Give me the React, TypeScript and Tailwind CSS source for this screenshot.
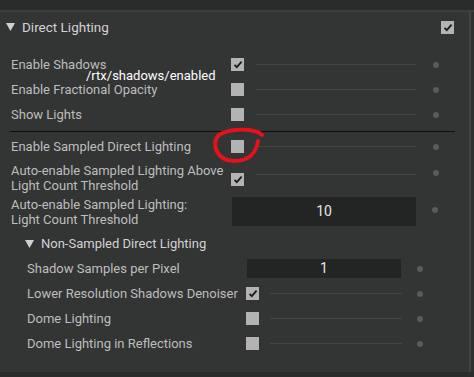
import React from 'react';

const Check = ({ on }: { on: boolean }) => (
  <div className="w-[13px] h-[13px] bg-[#b3b3b3] flex items-center justify-center shrink-0">
    {on && (
      <svg width="10" height="9" viewBox="0 0 10 9">
        <path d="M1.5 4.8 L3.8 7.2 L8.6 1.6" stroke="#1c1c1c" strokeWidth="1.8" fill="none" />
      </svg>
    )}
  </div>
);

const Dot = () => <div className="w-[6px] h-[6px] rounded-full bg-[#5a5b5b] shrink-0" />;

const Triangle = () => (
  <svg width="9" height="8" viewBox="0 0 9 8" className="shrink-0">
    <path d="M0 0 L9 0 L4.5 8 Z" fill="#d0d0d0" />
  </svg>
);

type RowProps = { label: React.ReactNode; on: boolean; nested?: boolean; h?: string };

const CheckRow = ({ label, on, nested, h = 'h-[25px]' }: RowProps) => (
  <div className={`flex items-center ${h}`}>
    <div className={nested ? 'w-[219px] leading-[15px]' : 'w-[220px] leading-[15px]'}>{label}</div>
    <Check on={on} />
    <div className={nested ? 'ml-[11px] w-[132px] h-px bg-[#434444]' : 'ml-[12px] w-[160px] h-px bg-[#434444]'} />
    <div className={nested ? 'ml-[15px]' : 'ml-[17px]'}>
      <Dot />
    </div>
  </div>
);

export default function App() {
  return (
    <div
      className="relative w-[474px] h-[377px] overflow-hidden bg-[#2b2c2c] text-[13px] text-[#bdbebe]"
      style={{ fontFamily: 'Roboto, "Noto Sans", sans-serif' }}
    >
      <div className="h-[10px] bg-[#2a2b2b]" />
      <div className="h-[2px] bg-[#3b3c3c]" />
      <div className="flex h-[360px]">
        <div className="w-[469px] bg-[#333434] flex flex-col">
          {/* header */}
          <div className="h-[30px] flex items-center pl-[6px] pr-[15px]">
            <Triangle />
            <span className="ml-[7px] text-[13.5px] text-[#d2d2d2]">Direct Lighting</span>
            <div className="ml-auto">
              <Check on={true} />
            </div>
          </div>

          <div className="mt-[10px] pl-[11px]">
            <CheckRow label="Enable Shadows" on={true} />
            <CheckRow label="Enable Fractional Opacity" on={false} />
            <CheckRow label="Show Lights" on={false} />
            <div className="mt-[4px] h-px w-[445px] -ml-px bg-[#0e0e0e]" />
            <div className="mt-[2px]">
              <CheckRow label="Enable Sampled Direct Lighting" on={false} />
            </div>
            <div className="flex items-center h-[37px]">
              <div className="w-[220px] leading-[15px]">
                Auto-enable Sampled Lighting Above
                <br />
                Light Count Threshold
              </div>
              <div className="mt-[4px]">
                <Check on={true} />
              </div>
              <div className="ml-[12px] w-[160px] h-px bg-[#434444] -mt-[6px]" />
              <div className="ml-[17px] -mt-[10px]">
                <Dot />
              </div>
            </div>
            <div className="flex items-center h-[31px]">
              <div className="w-[221px] leading-[15px]">
                Auto-enable Sampled Lighting:
                <br />
                Light Count Threshold
              </div>
              <div className="w-[184px] h-[29px] bg-[#232424] flex items-center justify-center text-[#e6e6e6] text-[14px]">
                10
              </div>
              <div className="ml-[16px] -mt-[4px]">
                <Dot />
              </div>
            </div>
          </div>

          {/* nested section */}
          <div className="mt-[5px] h-[24px] flex items-center pl-[25px]">
            <Triangle />
            <span className="ml-[7px] text-[13px] text-[#d2d2d2]">Non-Sampled Direct Lighting</span>
          </div>
          <div className="pl-[27px]">
            <div className="flex items-center h-[25px]">
              <div className="w-[220px]">Shadow Samples per Pixel</div>
              <div className="w-[154px] h-[19px] bg-[#232424] flex items-center justify-center text-[#e6e6e6] text-[14px]">
                1
              </div>
              <div className="ml-[16px]">
                <Dot />
              </div>
            </div>
            <CheckRow label="Lower Resolution Shadows Denoiser" on={true} nested />
            <CheckRow label="Dome Lighting" on={false} nested />
            <CheckRow label="Dome Lighting in Reflections" on={false} nested />
          </div>
        </div>
        <div className="w-[2px] bg-[#424343]" />
        <div className="flex-1 bg-[#2e2f2f]" />
      </div>
      <div className="h-[5px] bg-[#2a2b2b]" />

      {/* tooltip */}
      <div className="absolute left-[86px] top-[67px] text-[13px] text-white leading-[17px]">
        /rtx/shadows/enabled
      </div>

      {/* red hand-drawn circle */}
      <svg className="absolute left-0 top-0" width="474" height="377" viewBox="0 0 474 377">
        <path
          d="M262 135 C256 128, 229 128, 219 135 C210 143, 217 161, 234 161 C250 161, 256 153, 258 141"
          stroke="#e3121b"
          strokeWidth="4"
          fill="none"
          strokeLinecap="round"
        />
      </svg>
    </div>
  );
}
